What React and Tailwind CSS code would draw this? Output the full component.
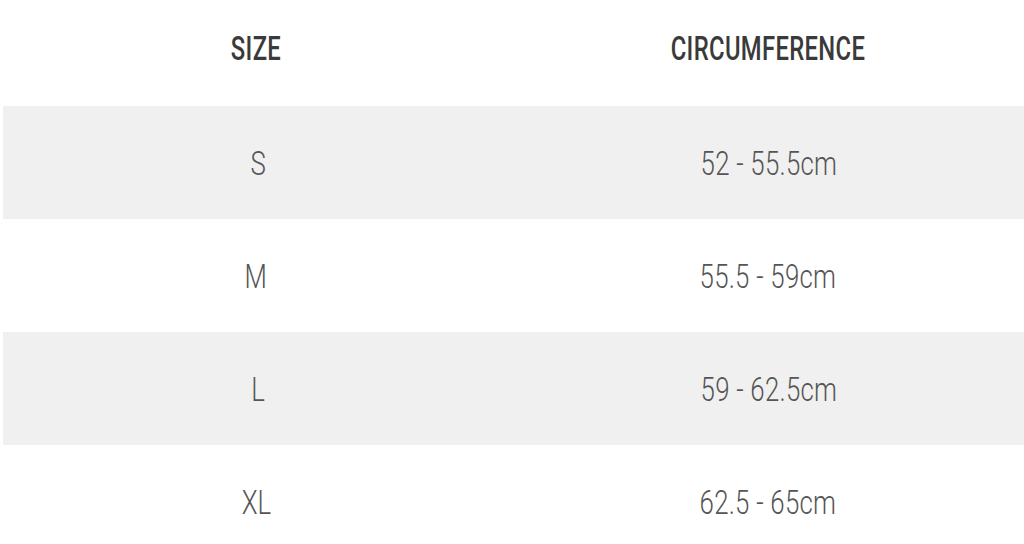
export default function App() {
  const rows = [
    ["S", "52 - 55.5cm", true],
    ["M", "55.5 - 59cm", false],
    ["L", "59 - 62.5cm", true],
    ["XL", "62.5 - 65cm", false],
  ];
  return (
    <div className="w-[1024px] h-[544px] overflow-hidden bg-white" style={{ fontFamily: "Roboto, 'Liberation Sans', sans-serif" }}>
      <div className="grid grid-cols-2 h-[106px] pb-[10px] items-center">
        <div className="flex justify-center">
          <span className="inline-block text-[34px] font-medium text-[#3a3a3a] scale-x-[0.7] tracking-[0.5px] leading-none">SIZE</span>
        </div>
        <div className="flex justify-center">
          <span className="inline-block text-[34px] font-medium text-[#3a3a3a] scale-x-[0.7] tracking-[0.5px] leading-none">CIRCUMFERENCE</span>
        </div>
      </div>
      {rows.map(([s, c, g]) => (
        <div key={s} className={`grid grid-cols-2 h-[113px] items-center ${g ? "bg-[#f0f0f0] ml-[3px]" : "bg-white"}`}>
          <div className="flex justify-center">
            <span className="inline-block text-[34px] font-light text-[#555] scale-x-[0.76] leading-none whitespace-pre">{s}</span>
          </div>
          <div className="flex justify-center">
            <span className="inline-block text-[34px] font-light text-[#555] scale-x-[0.76] tracking-[0.3px] leading-none whitespace-pre">{c}</span>
          </div>
        </div>
      ))}
    </div>
  );
}
